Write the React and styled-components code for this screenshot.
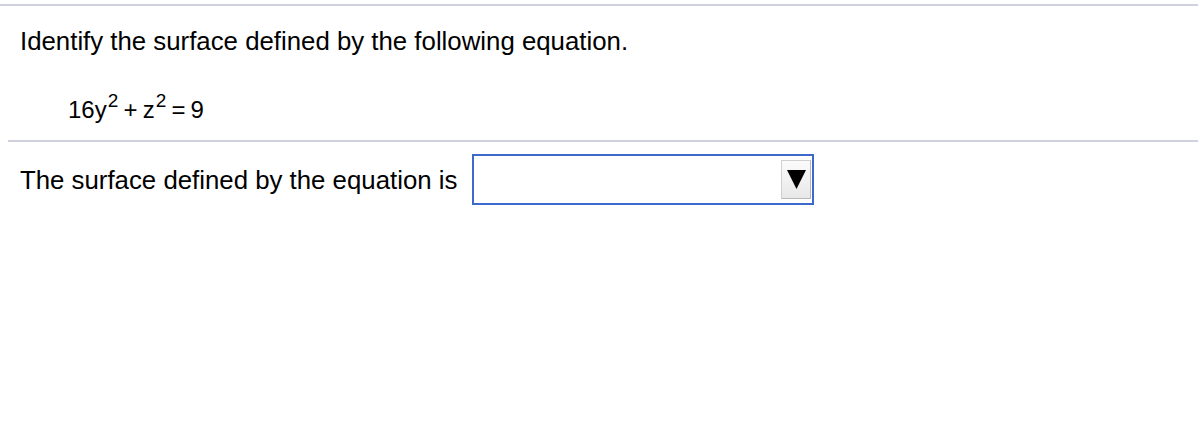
import React from 'react';
import styled, { createGlobalStyle } from 'styled-components';

const GlobalStyle = createGlobalStyle`
    html, body {
        margin: 0;
        padding: 0;
        background: #fff;
    }
    body {
        font-family: "Liberation Sans", Arial, Helvetica, sans-serif;
        color: #000;
    }
`;

export default function App() {
    return (
        <>
            <GlobalStyle />
            <Page>
                <Question>
                    <Prompt>Identify the surface defined by the following equation.</Prompt>
                    <Equation>
                        16y<Sup>2</Sup> + z<Sup>2</Sup> = 9
                    </Equation>
                </Question>
                <Divider />
                <AnswerRow>
                    <AnswerText>The surface defined by the equation is</AnswerText>
                    <Select>
                        <DropButton>
                            <svg width="19" height="19" viewBox="0 0 19 19">
                                <polygon points="0,0 19,0 9.5,19" fill="#000" />
                            </svg>
                        </DropButton>
                    </Select>
                </AnswerRow>
            </Page>
        </>
    );
}

const Page = styled.div`
    margin-top: 4px;
    border-top: 2px solid #cfd1dc;
    display: flex;
    flex-direction: column;
`;

const Question = styled.div`
    padding: 20px 0 0 20px;
    height: 134px;
    box-sizing: border-box;
`;

const Prompt = styled.div`
    font-size: 25.8px;
    line-height: 30px;
`;

const Equation = styled.div`
    margin: 40px 0 0 48px;
    font-size: 24px;
    line-height: 28px;
    word-spacing: -1.5px;
`;

const Sup = styled.span`
    font-size: 19px;
    position: relative;
    top: -11px;
    margin-left: 1px;
`;

const Divider = styled.div`
    margin-left: 8px;
    height: 2px;
    background: #cfd1dc;
`;

const AnswerRow = styled.div`
    display: flex;
    align-items: center;
    padding: 12px 0 0 20px;
`;

const AnswerText = styled.span`
    font-size: 25.8px;
    line-height: 30px;
    width: 452px;
`;

const Select = styled.div`
    width: 342px;
    height: 51px;
    box-sizing: border-box;
    border: 2px solid #3d69cc;
    display: flex;
    align-items: center;
    justify-content: flex-end;
    padding-right: 1px;
`;

const DropButton = styled.div`
    width: 30px;
    height: 39px;
    box-sizing: border-box;
    border: 1px solid #d0d0d0;
    border-right-color: #b8b8b8;
    border-bottom-color: #b8b8b8;
    background: linear-gradient(#fbfbfb, #e8e8e8);
    display: flex;
    align-items: center;
    justify-content: center;
`;
